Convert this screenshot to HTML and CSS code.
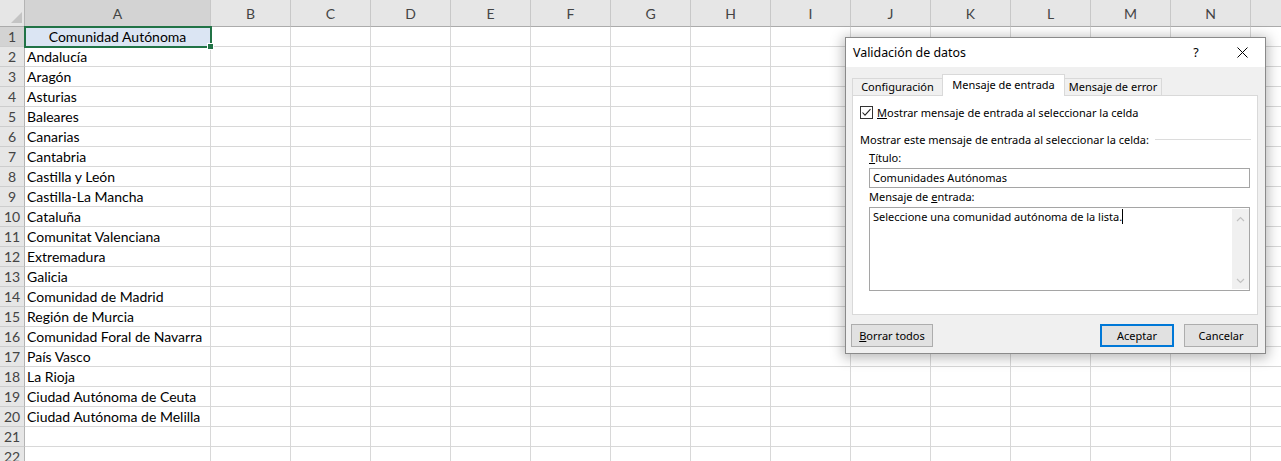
FILE: index.html
```html
<!DOCTYPE html>
<html lang="es">
<head>
<meta charset="utf-8">
<title>Validación de datos</title>
<link rel="stylesheet" href="styles.css">
</head>
<body>
<div class="sheet">
  <div class="colheads">
    <div class="corner"><span class="tri"></span></div>
    <div class="ch ch-a sel">A</div>
    <div class="ch">B</div>
    <div class="ch">C</div>
    <div class="ch">D</div>
    <div class="ch">E</div>
    <div class="ch">F</div>
    <div class="ch">G</div>
    <div class="ch">H</div>
    <div class="ch">I</div>
    <div class="ch">J</div>
    <div class="ch">K</div>
    <div class="ch">L</div>
    <div class="ch">M</div>
    <div class="ch">N</div>
    <div class="ch ch-rest"></div>
  </div>
  <div class="grid">
    <div class="rowheads">
      <div class="rh sel">1</div>
      <div class="rh">2</div>
      <div class="rh">3</div>
      <div class="rh">4</div>
      <div class="rh">5</div>
      <div class="rh">6</div>
      <div class="rh">7</div>
      <div class="rh">8</div>
      <div class="rh">9</div>
      <div class="rh">10</div>
      <div class="rh">11</div>
      <div class="rh">12</div>
      <div class="rh">13</div>
      <div class="rh">14</div>
      <div class="rh">15</div>
      <div class="rh">16</div>
      <div class="rh">17</div>
      <div class="rh">18</div>
      <div class="rh">19</div>
      <div class="rh">20</div>
      <div class="rh">21</div>
      <div class="rh">22</div>
    </div>
    <div class="cola">
      <div class="cell active">Comunidad Autónoma</div>
      <div class="cell">Andalucía</div>
      <div class="cell">Aragón</div>
      <div class="cell">Asturias</div>
      <div class="cell">Baleares</div>
      <div class="cell">Canarias</div>
      <div class="cell">Cantabria</div>
      <div class="cell">Castilla y León</div>
      <div class="cell">Castilla-La Mancha</div>
      <div class="cell">Cataluña</div>
      <div class="cell">Comunitat Valenciana</div>
      <div class="cell">Extremadura</div>
      <div class="cell">Galicia</div>
      <div class="cell">Comunidad de Madrid</div>
      <div class="cell">Región de Murcia</div>
      <div class="cell">Comunidad Foral de Navarra</div>
      <div class="cell">País Vasco</div>
      <div class="cell">La Rioja</div>
      <div class="cell">Ciudad Autónoma de Ceuta</div>
      <div class="cell">Ciudad Autónoma de Melilla</div>
      <div class="cell"></div>
      <div class="cell"></div>
    </div>
    <div class="rest"></div>
  </div>
</div>

<div class="dialog">
  <div class="titlebar">
    <span class="title">Validación de datos</span>
    <span class="tbtn help">?</span>
    <span class="tbtn close">
      <svg width="11" height="11" viewBox="0 0 11 11"><path d="M0.5 0.5 L10.5 10.5 M10.5 0.5 L0.5 10.5" stroke="#000" stroke-width="1" fill="none"/></svg>
    </span>
  </div>
  <div class="dlg-body">
    <div class="tabs">
      <div class="tab t1">Configuración</div>
      <div class="tab t2 active">Mensaje de entrada</div>
      <div class="tab t3">Mensaje de error</div>
    </div>
    <div class="panel">
      <div class="check">
        <svg class="box" width="13" height="13" viewBox="0 0 13 13"><rect x="0.5" y="0.5" width="12" height="12" fill="#fff" stroke="#333"/><path d="M2.5 6.5 L5 9.2 L10.5 3.2" stroke="#222" stroke-width="1.1" fill="none"/></svg>
        <span><u>M</u>ostrar mensaje de entrada al seleccionar la celda</span>
      </div>
      <div class="group"><span>Mostrar este mensaje de entrada al seleccionar la celda:</span><span class="rule"></span></div>
      <div class="flabel"><u>T</u>ítulo:</div>
      <div class="input">Comunidades Autónomas</div>
      <div class="flabel">Mensaje de <u>e</u>ntrada:</div>
      <div class="textarea">
        <div class="ta-text">Seleccione una comunidad autónoma de la lista.<span class="caret"></span></div>
        <div class="scroll">
          <svg width="9" height="6" viewBox="0 0 9 6"><path d="M1 5 L4.5 1.5 L8 5" stroke="#c2c2c2" stroke-width="1.2" fill="none"/></svg>
          <svg width="9" height="6" viewBox="0 0 9 6"><path d="M1 1 L4.5 4.5 L8 1" stroke="#c2c2c2" stroke-width="1.2" fill="none"/></svg>
        </div>
      </div>
    </div>
    <div class="buttons">
      <div class="btn wide"><u>B</u>orrar todos</div>
      <div class="spacer"></div>
      <div class="btn primary">Aceptar</div>
      <div class="btn">Cancelar</div>
    </div>
  </div>
</div>
</body>
</html>
```

FILE: styles.css
```css
html, body {
  margin: 0;
  padding: 0;
}
body {
  width: 1281px;
  height: 461px;
  overflow: hidden;
  position: relative;
  background: #fff;
  font-family: "Lato", "Noto Sans", sans-serif;
  color: #000;
}

/* ---------- spreadsheet ---------- */
.colheads {
  display: flex;
  height: 27px;
  background: #e6e6e6;
}
.corner {
  width: 25px;
  flex: none;
  box-sizing: border-box;
  border-right: 1px solid #b4b4b4;
  border-bottom: 1px solid #ababab;
  position: relative;
}
.tri {
  position: absolute;
  right: 2px;
  bottom: 3px;
  width: 0;
  height: 0;
  border-left: 11px solid transparent;
  border-bottom: 11px solid #c4c4c4;
}
.ch {
  width: 80px;
  flex: none;
  box-sizing: border-box;
  border-right: 1px solid #c8c8c8;
  border-bottom: 1px solid #ababab;
  text-align: center;
  line-height: 27px;
  font-size: 14px;
  color: #444;
}
.ch-a { width: 186px; }
.ch-rest { flex: 1; border-right: none; }
.sel { background: #d3d3d3; }

.grid {
  display: flex;
  height: 434px;
}
.rowheads {
  width: 25px;
  flex: none;
  background: #e6e6e6;
}
.rh {
  height: 20px;
  box-sizing: border-box;
  border-right: 1px solid #b4b4b4;
  border-bottom: 1px solid #cdcdcd;
  text-align: center;
  line-height: 20px;
  font-size: 14px;
  color: #444;
}
.cola {
  width: 186px;
  flex: none;
}
.cell {
  height: 20px;
  box-sizing: border-box;
  border-right: 1px solid #d8d8d8;
  border-bottom: 1px solid #d8d8d8;
  padding-left: 2px;
  line-height: 20px;
  font-size: 14px;
  white-space: nowrap;
  overflow: visible;
}
.cell.active {
  background: #dbe5f3;
  text-align: center;
  padding-left: 0;
  position: relative;
  z-index: 2;
  outline: 2px solid #217346;
  outline-offset: -1px;
}
.cell.active::after {
  content: "";
  position: absolute;
  right: -4px;
  bottom: -4px;
  width: 5px;
  height: 5px;
  background: #217346;
  border: 1px solid #fff;
}
.rest {
  flex: 1;
  background-image:
    repeating-linear-gradient(to right, transparent 0 79px, #d8d8d8 79px 80px),
    repeating-linear-gradient(to bottom, transparent 0 19px, #d8d8d8 19px 20px);
}

/* ---------- dialog ---------- */
.dialog {
  position: absolute;
  left: 845px;
  top: 37px;
  width: 421px;
  height: 317px;
  box-sizing: border-box;
  border: 1px solid #8a8a8a;
  background: #f0f0f0;
  box-shadow: 0 2px 12px 2px rgba(0, 0, 0, 0.28);
  font-family: "Noto Sans", sans-serif;
  font-size: 11px;
  color: #000;
  z-index: 10;
}
.titlebar {
  height: 29px;
  background: #fff;
  display: flex;
  align-items: center;
  padding-left: 7px;
}
.title { flex: 1; font-size: 12.4px; }
.tbtn {
  width: 46px;
  height: 29px;
  display: flex;
  align-items: center;
  justify-content: center;
}
.help { font-size: 12.5px; }

.dlg-body {
  padding: 7px 7px 0 6px;
}
.tabs {
  display: flex;
  align-items: flex-end;
  height: 21px;
  position: relative;
  z-index: 2;
}
.tab {
  box-sizing: border-box;
  height: 17px;
  border: 1px solid #d9d9d9;
  border-bottom: none;
  background: #f0f0f0;
  text-align: center;
  line-height: 16px;
  white-space: nowrap;
}
.t1 { width: 90px; border-right: none; }
.t2 { width: 123px; }
.t3 { width: 97px; border-left: none; }
.tab.active {
  height: 22px;
  margin-bottom: -1px;
  background: #fff;
  line-height: 19px;
}

.panel {
  box-sizing: border-box;
  height: 220px;
  border: 1px solid #d9d9d9;
  background: #fff;
}
.check {
  display: flex;
  align-items: center;
  height: 13px;
  margin: 10px 0 0 7px;
}
.box { margin-right: 4px; flex: none; }
.group {
  display: flex;
  align-items: center;
  height: 16px;
  margin: 12px 6px 0 7px;
}
.rule {
  flex: 1;
  height: 0;
  border-top: 1px solid #dcdcdc;
  margin-left: 6px;
}
.flabel {
  height: 16px;
  line-height: 16px;
  margin: 3px 0 0 16px;
}
.flabel + .textarea { margin-top: 2px; }
.input {
  box-sizing: border-box;
  width: 381px;
  height: 20px;
  margin: 2px 0 0 16px;
  border: 1px solid #a5a5a5;
  padding-left: 3px;
  line-height: 18px;
}
.input + .flabel { margin-top: 1px; }
.textarea {
  box-sizing: border-box;
  width: 381px;
  height: 84px;
  margin-left: 16px;
  border: 1px solid #a5a5a5;
  display: flex;
}
.ta-text {
  flex: 1;
  padding: 1px 3px;
  line-height: 16px;
}
.caret {
  display: inline-block;
  width: 1px;
  height: 15px;
  background: #000;
  vertical-align: -3px;
}
.scroll {
  width: 17px;
  margin: 1px 0;
  background: #f0f0f0;
  display: flex;
  flex-direction: column;
  justify-content: space-between;
  align-items: center;
  padding: 7px 0 5px;
  box-sizing: border-box;
}
.scroll svg { display: block; }

.buttons {
  display: flex;
  margin: 9px 0 0 -1px;
}
.spacer { flex: 1; }
.btn {
  box-sizing: border-box;
  width: 74px;
  height: 23px;
  border: 1px solid #adadad;
  background: #e1e1e1;
  text-align: center;
  line-height: 21px;
}
.btn.wide { width: 82px; }
.btn.primary {
  border-color: #0078d7;
  box-shadow: inset 0 0 0 1px #0078d7;
  margin-right: 10px;
}
```
